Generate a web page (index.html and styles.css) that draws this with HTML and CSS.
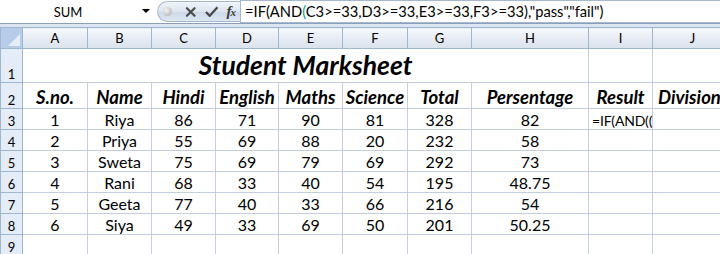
FILE: index.html
```html
<!DOCTYPE html>
<html lang="en">
<head>
  <meta charset="UTF-8" />
  <title>Student Marksheet</title>
  <link rel="stylesheet" href="styles.css">
</head>
<body>

  <div class="formula-bar">
    <div class="name-box">
      <span class="name">SUM</span>
      <span class="arrow"></span>
    </div>
    <div class="buttons">
      <span class="dot"></span>
      <svg class="btn" width="14" height="14" viewBox="0 0 14 14">
        <path d="M3 3 L11 11 M11 3 L3 11" stroke="#4a4a4a" stroke-width="2.2" stroke-linecap="round" fill="none"/>
      </svg>
      <svg class="btn" width="16" height="14" viewBox="0 0 16 14">
        <path d="M2 7 L6 11 L14 2" stroke="#4a4a4a" stroke-width="2.4" stroke-linejoin="round" fill="none"/>
      </svg>
      <span class="fx"><i>f</i><span>x</span></span>
    </div>
    <div class="formula">=IF(AND<span class="paren">(</span>C3&gt;=33,D3&gt;=33,E3&gt;=33,F3&gt;=33),"pass","fail")</div>
  </div>
  <div class="strip"></div>

  <table class="sheet">
    <colgroup>
      <col class="c-row">
      <col style="width:65px">
      <col style="width:64px">
      <col style="width:64px">
      <col style="width:63px">
      <col style="width:64px">
      <col style="width:65px">
      <col style="width:64px">
      <col style="width:117px">
      <col style="width:64px">
      <col style="width:80px">
    </colgroup>
    <tr class="heads">
      <th class="corner"><span class="tri"></span></th>
      <th>A</th><th>B</th><th>C</th><th>D</th><th>E</th><th>F</th><th>G</th><th>H</th><th>I</th><th>J</th>
    </tr>
    <tr class="r-title">
      <th class="rn">1</th>
      <td colspan="8" class="title">Student Marksheet</td>
      <td></td><td></td>
    </tr>
    <tr class="r-head">
      <th class="rn">2</th>
      <td>S.no.</td><td>Name</td><td>Hindi</td><td>English</td><td>Maths</td><td>Science</td><td>Total</td><td>Persentage</td><td>Result</td><td class="left">Division</td>
    </tr>
    <tr>
      <th class="rn">3</th>
      <td>1</td><td>Riya</td><td>86</td><td>71</td><td>90</td><td>81</td><td>328</td><td>82</td><td class="edit">=IF(AND((</td><td></td>
    </tr>
    <tr>
      <th class="rn">4</th>
      <td>2</td><td>Priya</td><td>55</td><td>69</td><td>88</td><td>20</td><td>232</td><td>58</td><td></td><td></td>
    </tr>
    <tr>
      <th class="rn">5</th>
      <td>3</td><td>Sweta</td><td>75</td><td>69</td><td>79</td><td>69</td><td>292</td><td>73</td><td></td><td></td>
    </tr>
    <tr>
      <th class="rn">6</th>
      <td>4</td><td>Rani</td><td>68</td><td>33</td><td>40</td><td>54</td><td>195</td><td>48.75</td><td></td><td></td>
    </tr>
    <tr>
      <th class="rn">7</th>
      <td>5</td><td>Geeta</td><td>77</td><td>40</td><td>33</td><td>66</td><td>216</td><td>54</td><td></td><td></td>
    </tr>
    <tr>
      <th class="rn">8</th>
      <td>6</td><td>Siya</td><td>49</td><td>33</td><td>69</td><td>50</td><td>201</td><td>50.25</td><td></td><td></td>
    </tr>
    <tr>
      <th class="rn">9</th>
      <td></td><td></td><td></td><td></td><td></td><td></td><td></td><td></td><td></td><td></td>
    </tr>
  </table>

</body>
</html>
```

FILE: styles.css
```css
body {
  margin: 0;
  font-family: 'Lato', 'Liberation Sans', sans-serif;
  background-color: #fff;
  color: #000;
  overflow: hidden;
  width: 720px;
  height: 254px;
}

/* formula bar */
.formula-bar {
  display: flex;
  align-items: center;
  height: 23px;
  border-bottom: 1px solid #8aa0bd;
  background-color: #fff;
}

.name-box {
  width: 152px;
  display: flex;
  align-items: center;
  justify-content: center;
  position: relative;
  font-size: 13px;
}

.name {
  margin-left: -16px;
}

.arrow {
  position: absolute;
  right: 2px;
  top: 5px;
  border-left: 4px solid transparent;
  border-right: 4px solid transparent;
  border-top: 4px solid #000;
}

.buttons {
  display: flex;
  align-items: center;
  gap: 7px;
  height: 21px;
  margin-left: 5px;
  padding: 0 4px 0 5px;
  width: 83px;
  box-sizing: border-box;
  border: 1px solid #a6b8cf;
  border-right: none;
  border-radius: 11px 0 0 11px;
  background: linear-gradient(#f1f5fa, #dbe4ef 50%, #cdd9e8 51%, #dde6f1);
}

.dot {
  width: 9px;
  height: 9px;
  border-radius: 50%;
  background: radial-gradient(circle at 35% 35%, #f4f4f4, #a9a9a9);
  margin-right: 5px;
}

.fx {
  font-family: 'Liberation Serif', serif;
  font-size: 15px;
  color: #3c3c3c;
  font-weight: 700;
}

.fx i {
  letter-spacing: -1px;
}

.fx span {
  font-style: italic;
  font-size: 11px;
}

.formula {
  flex: 1;
  height: 21px;
  line-height: 21px;
  border: 1px solid #a6b8cf;
  border-right: none;
  padding-left: 4px;
  font-size: 14.7px;
  white-space: nowrap;
  overflow: hidden;
}

.paren {
  color: #1c9a7a;
}

.strip {
  height: 3px;
  background-color: #dbe4ef;
}

/* sheet */
.sheet {
  border-collapse: collapse;
  table-layout: fixed;
  width: 732px;
  font-size: 16px;
}

.c-row {
  width: 22px;
}

.sheet td,
.sheet th {
  border: 1px solid #c3cfe0;
  padding: 0 2px;
  text-align: center;
  vertical-align: bottom;
  white-space: nowrap;
  overflow: hidden;
  font-weight: 400;
}

.sheet tr {
  height: 21px;
}

.heads th {
  height: 20px;
  font-size: 13px;
  vertical-align: middle;
  background: linear-gradient(#f6f8fb, #e4eaf2 60%, #d9e2ec);
  border-color: #9eb6ce;
}

.sheet th.rn {
  font-size: 13px;
  background-color: #e4ecf7;
  border-color: #9eb6ce;
  padding: 0;
}

.corner {
  position: relative;
  background: #b7cce8 !important;
}

.tri {
  position: absolute;
  right: 2px;
  bottom: 2px;
  border-left: 12px solid transparent;
  border-bottom: 12px solid #e6edf6;
}

.r-title {
  height: 34px !important;
}

.sheet .title {
  font-size: 26.5px;
  font-weight: 700;
  font-style: italic;
  padding-bottom: 1px;
}

.r-head {
  height: 26px !important;
}

.sheet .r-head td {
  font-size: 18.5px;
  font-weight: 700;
  font-style: italic;
}

.sheet .r-head td.left {
  text-align: left;
  overflow: visible;
  padding-left: 5px;
}

.sheet .edit {
  text-align: left;
  padding-left: 3px;
  padding-right: 0;
  font-size: 14px;
  letter-spacing: -0.2px;
  text-overflow: clip;
}
```
